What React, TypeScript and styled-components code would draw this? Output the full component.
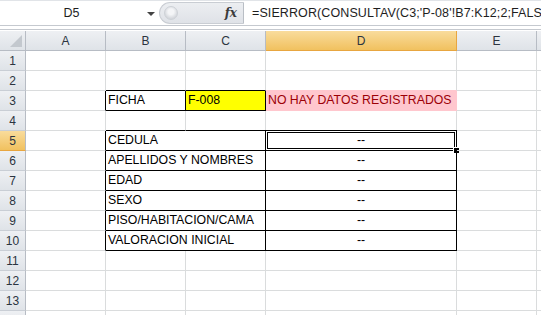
import styled, { createGlobalStyle } from "styled-components";

const GlobalStyle = createGlobalStyle`
    html, body {
        margin: 0;
        padding: 0;
        background: #ffffff;
        overflow: hidden;
    }
    body {
        font-family: "Liberation Sans", Arial, sans-serif;
    }
`

const GRID = '#dadcdd'
const HEAD_LINE = '#b7bcc4'

const Window = styled.div`
    width: 541px;
    height: 315px;
    overflow: hidden;
    background: #ffffff;
`

const FormulaBar = styled.div`
    display: flex;
    height: 25px;
    box-sizing: border-box;
    border-top: 1px solid #e1e4e8;
`

const NameBox = styled.div`
    position: relative;
    width: 159px;
    display: flex;
    align-items: center;
    justify-content: center;
    font-size: 12.5px;
    color: #1e1e1e;
    padding-right: 16px;
    box-sizing: border-box;
`

const DropArrow = styled.span`
    position: absolute;
    right: 4px;
    top: 11px;
    border-left: 4px solid transparent;
    border-right: 4px solid transparent;
    border-top: 4px solid #444;
`

const FxPill = styled.div`
    width: 85px;
    margin: 1px 0;
    display: flex;
    align-items: center;
    justify-content: space-between;
    padding: 0 6px 0 4px;
    box-sizing: border-box;
    background: linear-gradient(#eceef1, #dfe2e7);
    border: 1px solid #c9cdd3;
    border-right: 1px solid #b9bec5;
    border-radius: 12px 0 0 12px;
`

const Knob = styled.span`
    width: 12px;
    height: 12px;
    border-radius: 50%;
    background: radial-gradient(circle at 50% 40%, #f4f5f7 0 30%, #d5d8dd 70%);
    border: 1px solid #cdd1d6;
`

const Fx = styled.span`
    font-family: "DejaVu Serif", "Liberation Serif", serif;
    font-style: italic;
    font-weight: bold;
    font-size: 12px;
    color: #3b3b3b;
`

const FormulaInput = styled.div`
    flex: 1;
    display: flex;
    align-items: center;
    padding-left: 8px;
    font-size: 12.5px;
    letter-spacing: 0.1px;
    color: #1e1e1e;
    white-space: nowrap;
    overflow: hidden;
`

const Splitter = styled.div`
    height: 3px;
    margin-bottom: 1px;
    border-top: 1px solid #c5c9cf;
    border-bottom: 1px solid #c5c9cf;
`

const Sheet = styled.div`
    display: grid;
    grid-template-columns: 26px 80px 80px 80px 191px 80px 1fr;
    grid-auto-rows: 20px;
`

const Corner = styled.div`
    position: relative;
    background: linear-gradient(#eef0f3, #dfe3e8);
    border-right: 1px solid ${HEAD_LINE};
    border-bottom: 1px solid ${HEAD_LINE};
    box-sizing: border-box;

    &::after {
        content: "";
        position: absolute;
        right: 3px;
        bottom: 3px;
        border-left: 12px solid transparent;
        border-bottom: 12px solid #c3c8ce;
    }
`

const Header = styled.div<{ $active?: boolean; $row?: boolean }>`
    display: flex;
    align-items: center;
    justify-content: center;
    font-family: "Liberation Sans", Arial, sans-serif;
    font-size: 12px;
    color: #2b3440;
    box-sizing: border-box;
    background: ${p => p.$active ? 'linear-gradient(#f9dc9c, #f1c15f)' : 'linear-gradient(#eef0f3, #dfe3e8)'};
    border-right: 1px solid ${p => p.$active && !p.$row ? '#e8a640' : HEAD_LINE};
    border-bottom: 1px solid ${p => p.$active ? '#e8a640' : p.$row ? '#c9ced5' : HEAD_LINE};
`

const Cell = styled.div<{ $span?: number; $right: string; $bottom: string; $bg?: string; $color?: string; $center?: boolean }>`
    position: relative;
    grid-column: span ${p => p.$span ?? 1};
    display: flex;
    align-items: flex-end;
    justify-content: ${p => p.$center ? 'center' : 'flex-start'};
    padding: 0 2px 3px;
    box-sizing: border-box;
    font-size: 12.3px;
    line-height: 14px;
    white-space: nowrap;
    color: ${p => p.$color ?? '#000'};
    background: ${p => p.$bg ?? 'transparent'};
    border-right: 1px solid ${p => p.$right};
    border-bottom: 1px solid ${p => p.$bottom};
`

const Selection = styled.div`
    position: absolute;
    top: -1px;
    left: -1px;
    right: -1px;
    bottom: -1px;
    border: 1px solid #000;
    box-shadow: inset 0 0 0 1px #fff, inset 0 0 0 2px #000;
    pointer-events: none;
`

const FillHandle = styled.span`
    position: absolute;
    right: -4px;
    bottom: -4px;
    width: 5px;
    height: 5px;
    background: #000;
    border: 1px solid #fff;
`

type CellData = {
    text?: string;
    span?: number;
    bg?: string;
    color?: string;
    center?: boolean;
    boxed?: boolean;
}

const COLS = ['A', 'B', 'C', 'D', 'E', '']
const ROWS = 14

// row -> col index (0 = A) -> content
const data: Record<number, Record<number, CellData>> = {
    3: {
        1: { text: 'FICHA', boxed: true },
        2: { text: 'F-008', boxed: true, bg: '#ffff00' },
        3: { text: 'NO HAY DATOS REGISTRADOS', bg: '#ffc7ce', color: '#9c0006' },
    },
}

const labels = ['CEDULA', 'APELLIDOS Y NOMBRES', 'EDAD', 'SEXO', 'PISO/HABITACION/CAMA', 'VALORACION INICIAL']
labels.forEach((label, i) => {
    data[5 + i] = {
        1: { text: label, span: 2, boxed: true },
        3: { text: '--', center: true, boxed: true },
    }
})

// which merged cell owns a grid position
const owner = (r: number, c: number): CellData | undefined => {
    const row = data[r]
    if (!row) return undefined
    if (row[c]) return row[c]
    if (row[c - 1]?.span === 2) return row[c - 1]
    return undefined
}

const edge = (a?: CellData, b?: CellData) => {
    if (a && a === b) return 'transparent'
    if (a?.boxed || b?.boxed) return '#000'
    if (a?.bg) return a.bg
    if (b?.bg) return b.bg
    return GRID
}

const SheetRow = ({ r }: { r: number }) => {
    const cells = []
    for (let c = 0; c < COLS.length; c++) {
        const own = owner(r, c)
        const d = data[r]?.[c]
        if (own && !d) continue
        const span = d?.span ?? 1
        const last = c + span - 1
        cells.push(
            <Cell
                key={c}
                $span={span}
                $right={edge(owner(r, last), owner(r, last + 1))}
                $bottom={edge(own, owner(r + 1, c))}
                $bg={d?.bg}
                $color={d?.color}
                $center={d?.center}
            >
                {d?.text}
                {r === 5 && c === 3 && (
                    <Selection>
                        <FillHandle />
                    </Selection>
                )}
            </Cell>
        )
    }
    return (
        <>
            {/* last row is only a sliver at the window edge, its number is not visible */}
            <Header $row $active={r === 5}>{r < ROWS ? r : ''}</Header>
            {cells}
        </>
    )
}

const App = () => {
    return (
        <Window>
            <GlobalStyle />
            <FormulaBar>
                <NameBox>
                    D5
                    <DropArrow />
                </NameBox>
                <FxPill>
                    <Knob />
                    <Fx>fx</Fx>
                </FxPill>
                <FormulaInput>=SIERROR(CONSULTAV(C3;'P-08'!B7:K12;2;FALS</FormulaInput>
            </FormulaBar>
            <Splitter />
            <Sheet>
                <Corner />
                {COLS.map(col => (
                    <Header key={col} $active={col === 'D'}>{col}</Header>
                ))}
                {Array.from({ length: ROWS }, (_, i) => (
                    <SheetRow key={i} r={i + 1} />
                ))}
            </Sheet>
        </Window>
    )
}

export default App
